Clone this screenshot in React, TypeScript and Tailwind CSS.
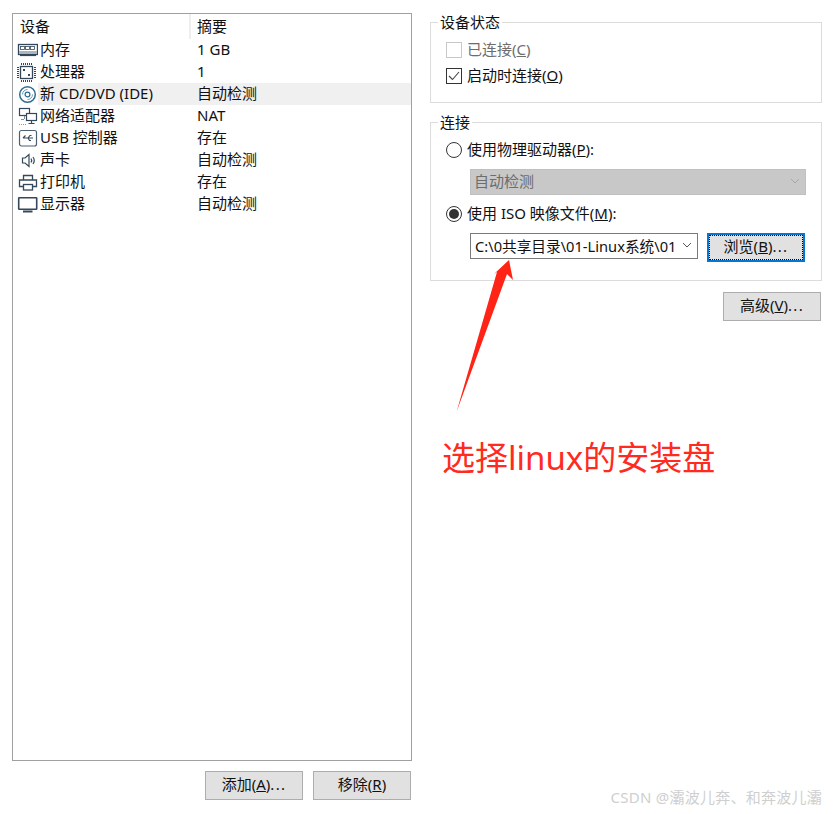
import type { ReactNode } from "react";

const dark = "#33485a";

const MemoryIcon = () => (
  <svg width="21" height="22" viewBox="0 0 21 22" fill="none">
    <rect x="1.5" y="5.5" width="19" height="10" stroke={dark} strokeWidth="1.3" />
    <rect x="3.5" y="7.5" width="4" height="3" stroke={dark} strokeWidth="0.8" />
    <rect x="8.5" y="7.5" width="4" height="3" stroke={dark} strokeWidth="0.8" />
    <rect x="13.5" y="7.5" width="4" height="3" stroke={dark} strokeWidth="0.8" />
    <rect x="2" y="12" width="18" height="3" fill="#a9b6c0" />
    <path d="M3 16.5h16" stroke={dark} strokeWidth="1.2" />
  </svg>
);

const CpuIcon = () => (
  <svg width="21" height="22" viewBox="0 0 21 22" fill="none">
    <rect x="3.5" y="5.5" width="12" height="12" stroke={dark} strokeWidth="1.3" />
    <path d="M4 3h11M4 20h11M1 6v11M18 6v11" stroke={dark} strokeWidth="2" strokeDasharray="1 1" />
    <rect x="6" y="8" width="2" height="2" fill={dark} />
    <rect x="11" y="13" width="2" height="2" fill={dark} />
  </svg>
);

const CdIcon = () => (
  <svg width="21" height="22" viewBox="0 0 21 22" fill="none">
    <circle cx="10.5" cy="11.5" r="7.8" stroke="#2f6c8f" strokeWidth="1.5" />
    <circle cx="10.5" cy="11.5" r="2.4" stroke="#2f6c8f" strokeWidth="1.2" />
    <path d="M5.5 11.5a5 5 0 0 1 5-5" stroke="#6f9db8" />
    <path d="M15.5 11.5a5 5 0 0 1-5 5" stroke="#6f9db8" />
  </svg>
);

const NetworkIcon = () => (
  <svg width="21" height="22" viewBox="0 0 21 22" fill="none">
    <rect x="2.5" y="3.5" width="10" height="7" stroke={dark} strokeWidth="1.2" />
    <path d="M7.5 11v3M4 14.5h3" stroke="#7d8c98" />
    <rect x="9.5" y="8.5" width="10" height="7" fill="white" stroke={dark} strokeWidth="1.2" />
    <path d="M14.5 16v2M11.5 18.5h6" stroke={dark} strokeWidth="1.2" />
    <path d="M2 19.5h7" stroke="#8d9aa5" strokeDasharray="1 1" />
  </svg>
);

const UsbIcon = () => (
  <svg width="21" height="22" viewBox="0 0 21 22" fill="none">
    <rect x="2.5" y="3.5" width="17" height="15.5" rx="2" stroke="#4c6070" strokeWidth="1.2" />
    <path d="M6 11h10M6 11l2.5-2.5M11 11l2-2.5h1.5M11 11l1.5 2.5h1.5" stroke={dark} strokeWidth="1.1" />
  </svg>
);

const SpeakerIcon = () => (
  <svg width="21" height="22" viewBox="0 0 21 22" fill="none">
    <path d="M5.5 9h2.5l4-3.5v12l-4-3.5H5.5z" stroke={dark} strokeWidth="1.2" />
    <path d="M14 9.5a3.5 3.5 0 0 1 0 4M16 8a6 6 0 0 1 0 7" stroke={dark} strokeWidth="1.2" />
  </svg>
);

const PrinterIcon = () => (
  <svg width="21" height="22" viewBox="0 0 21 22" fill="none">
    <path d="M6.5 9V4.5h9V9" stroke={dark} strokeWidth="1.3" />
    <path d="M6 15.5H2.5v-6.5h17v6.5H16" stroke={dark} strokeWidth="1.3" />
    <rect x="6.5" y="13.5" width="9" height="5.5" fill="white" stroke={dark} strokeWidth="1.3" />
  </svg>
);

const MonitorIcon = () => (
  <svg width="21" height="22" viewBox="0 0 21 22" fill="none">
    <rect x="1.7" y="4.7" width="18" height="11.5" rx="0.5" stroke={dark} strokeWidth="1.6" />
    <path d="M6 18.5h9.5" stroke={dark} strokeWidth="2" />
  </svg>
);

const devices = [
  { name: "内存", summary: "1 GB", icon: MemoryIcon },
  { name: "处理器", summary: "1", icon: CpuIcon },
  { name: "新 CD/DVD (IDE)", summary: "自动检测", icon: CdIcon, selected: true },
  { name: "网络适配器", summary: "NAT", icon: NetworkIcon },
  { name: "USB 控制器", summary: "存在", icon: UsbIcon },
  { name: "声卡", summary: "自动检测", icon: SpeakerIcon },
  { name: "打印机", summary: "存在", icon: PrinterIcon },
  { name: "显示器", summary: "自动检测", icon: MonitorIcon },
];

const Chevron = ({ color }: { color: string }) => (
  <svg width="10" height="7" viewBox="0 0 10 7" fill="none">
    <path d="M1 1l4 4 4-4" stroke={color} />
  </svg>
);

const Dots = () => <span className="tracking-[1.3px]">...</span>;

const Button = ({ children }: { children: ReactNode }) => (
  <button className="w-[98px] h-[29px] bg-[#e1e1e1] border border-[#adadad] flex items-center justify-center pb-[2px]">
    {children}
  </button>
);

const Radio = ({ checked }: { checked?: boolean }) => (
  <span className="w-4 h-4 rounded-full border border-[#333333] flex items-center justify-center shrink-0">
    {checked && <span className="w-[10px] h-[10px] rounded-full bg-[#333333]" />}
  </span>
);

export default function App() {
  return (
    <div className="relative w-[834px] h-[814px] bg-white overflow-hidden pl-3 pt-[13px] flex gap-[18px] text-[15px] text-[#111111] font-['Noto_Sans','Noto_Sans_CJK_SC',sans-serif]">
      {/* Device list */}
      <div className="w-[400px]">
        <div className="h-[748px] border border-[#a0a0a0]">
          <div className="flex h-[25px] items-center">
            <div className="w-[178px] pl-[7px] pb-[1px] h-full flex items-center border-r-2 border-[#eeeeee]">设备</div>
            <div className="pl-[6px] pb-[1px]">摘要</div>
          </div>
          {devices.map((device) => (
            <div key={device.name} className="flex h-[22px]">
              <div className="w-[25px] pl-1 shrink-0">
                <device.icon />
              </div>
              <div className={`flex flex-1 items-center pl-[2px] pb-[1px] ${device.selected ? "bg-[#f0f0f0]" : ""}`}>
                <span className="w-[157px]">{device.name}</span>
                <span>{device.summary}</span>
              </div>
            </div>
          ))}
        </div>
        <div className="flex justify-end gap-[10px] mt-[10px] pr-[1px]">
          <Button>
            <span>添加(<u>A</u>)<Dots /></span>
          </Button>
          <Button>移除(<u>R</u>)</Button>
        </div>
      </div>

      {/* Settings */}
      <div className="w-[392px]">
        <fieldset className="h-[90px] border border-[#dcdcdc] px-[15px] pt-[6px]">
          <legend className="-ml-[8px] px-[2px] leading-[18px]">设备状态</legend>
          <div className="flex items-center h-[26px] gap-[5px] text-[#6d6d6d]">
            <span className="w-4 h-4 border border-[#c8c8c8]" />
            <span className="pb-[1px]">已连接(<u>C</u>)</span>
          </div>
          <div className="flex items-center h-[26px] gap-[5px]">
            <span className="w-4 h-4 border border-[#333333] flex items-center justify-center">
              <svg width="12" height="10" viewBox="0 0 12 10" fill="none">
                <path d="M1 5l3.5 3.5L11 1" stroke="#444444" strokeWidth="1.1" />
              </svg>
            </span>
            <span className="pb-[1px]">启动时连接(<u>O</u>)</span>
          </div>
        </fieldset>

        <fieldset className="h-[168px] mt-[10px] border border-[#dcdcdc] px-[15px] pt-[6px]">
          <legend className="-ml-[8px] px-[2px] leading-[18px]">连接</legend>
          <div className="flex items-center h-[26px] gap-[5px]">
            <Radio />
            <span className="pb-[1px]">使用物理驱动器(<u>P</u>):</span>
          </div>
          <div className="mt-[6px] ml-6 w-[336px] h-[26px] bg-[#c8c8c8] border border-[#c0c0c0] flex items-center justify-between pl-[3px] pb-[1px] pr-[5px] text-[#6d6d6d]">
            <span>自动检测</span>
            <Chevron color="#a8a8a8" />
          </div>
          <div className="flex items-center h-[26px] gap-[5px] mt-[6px]">
            <Radio checked />
            <span className="pb-[1px]">使用 ISO 映像文件(<u>M</u>):</span>
          </div>
          <div className="mt-[6px] ml-6 flex items-start gap-[9px]">
            <div className="w-[228px] h-[26px] border border-[#7a7a7a] flex items-center justify-between pl-1 pr-[5px] pb-[1px] text-[14.67px]">
              <span className="whitespace-nowrap overflow-hidden">C:\0共享目录\01-Linux系统\01</span>
              <span className="shrink-0 ml-[6px]">
                <Chevron color="#555555" />
              </span>
            </div>
            <div className="w-[98px] h-[29px] bg-[#e1e1e1] border-2 border-[#0078d7] flex">
              <div className="flex-1 border border-dotted border-black flex items-center justify-center pb-[2px]">
                <span>浏览(<u>B</u>)<Dots /></span>
              </div>
            </div>
          </div>
        </fieldset>

        <div className="flex justify-end mt-[11px] pr-[1px]">
          <Button>
            <span>高级(<u>V</u>)<Dots /></span>
          </Button>
        </div>
      </div>

      {/* Annotation */}
      <svg className="absolute left-[450px] top-[255px]" width="70" height="160" viewBox="450 255 70 160">
        <polygon points="509,260 513,280 507,274 456.5,412 497,272 494,274" fill="#ff2416" />
      </svg>
      <div className="absolute left-[442px] top-[435px] text-[33px] leading-[46px] text-[#ff2a20] whitespace-nowrap">
        选择linux的安装盘
      </div>

      {/* Watermark */}
      <div className="absolute right-[12px] top-[787px] text-[15px] tracking-[0.25px] leading-[20px] text-[#cfcfcf] whitespace-nowrap">
        CSDN @灞波儿奔、和奔波儿灞
      </div>
    </div>
  );
}
